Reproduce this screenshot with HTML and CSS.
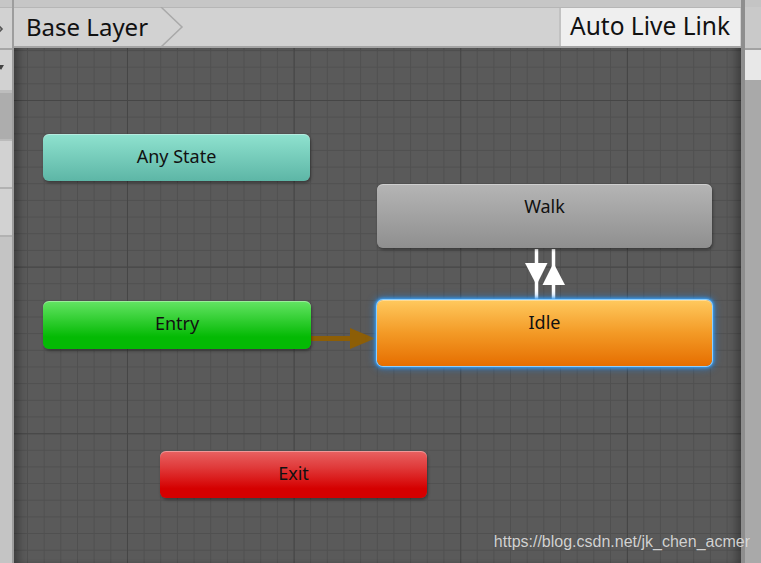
FILE: index.html
```html
<!DOCTYPE html>
<html lang="en">
<head>
    <meta charset="UTF-8">
    <title>Animator - Base Layer</title>
    <link rel="stylesheet" href="styles.css">
</head>
<body>
    <div class="window">
        <!-- left panel (parameters/layers list, clipped) -->
        <div class="side-left">
            <div class="sl-top"></div>
            <div class="sl-head">
                <svg class="sl-glyph" width="8" height="12" viewBox="0 0 8 12"><path d="M0 1 L5 6 L0 11" fill="none" stroke="#555" stroke-width="1.6"/></svg>
            </div>
            <div class="sl-row sl-search">
                <svg class="sl-drop" width="6" height="6" viewBox="0 0 6 6"><polygon points="0,0 6,0 3,5" fill="#444"/></svg>
            </div>
            <div class="sl-row sl-selected"></div>
            <div class="sl-row"></div>
            <div class="sl-row"></div>
            <div class="sl-rest"></div>
        </div>

        <div class="main">
            <div class="toolbar">
                <div class="crumb">Base Layer</div>
                <svg class="crumb-arrow" width="24" height="39" viewBox="0 0 24 39"><path d="M1 0 L22 20 L1 40" fill="none" stroke="#a9a9a9" stroke-width="1.5"/></svg>
                <div class="spacer"></div>
                <div class="live-link">Auto Live Link</div>
            </div>

            <!-- state machine graph -->
            <div class="canvas">
                <svg class="links" width="727" height="515" viewBox="0 0 727 515">
                    <!-- Entry -> Idle -->
                    <line x1="297" y1="290.5" x2="340" y2="290.5" stroke="#8d5e06" stroke-width="5"/>
                    <polygon points="336,280 361,290.5 336,301" fill="#8d5e06"/>
                    <!-- Walk -> Idle -->
                    <line x1="522.5" y1="201" x2="522.5" y2="252" stroke="#fff" stroke-width="3.5"/>
                    <polygon points="511,215 533.5,215 522.5,237" fill="#fff"/>
                    <!-- Idle -> Walk -->
                    <line x1="539.5" y1="201" x2="539.5" y2="252" stroke="#fff" stroke-width="3.5"/>
                    <polygon points="528.5,237 551,237 539.5,215" fill="#fff"/>
                </svg>

                <div class="node any-state" style="left: 29px; top: 86px; width: 267px; height: 47px;">Any State</div>
                <div class="node walk" style="left: 363px; top: 136px; width: 335px; height: 64px;">Walk</div>
                <div class="node entry" style="left: 29px; top: 253px; width: 268px; height: 48px;">Entry</div>
                <div class="node idle" style="left: 363px; top: 252px; width: 335px; height: 66px;">Idle</div>
                <div class="node exit" style="left: 146px; top: 403px; width: 267px; height: 47px;">Exit</div>
            </div>
        </div>

        <!-- right panel (inspector, clipped) -->
        <div class="side-right">
            <div class="sr-head"></div>
            <div class="sr-field"></div>
            <div class="sr-rest"></div>
        </div>
    </div>

    <div class="watermark">https://blog.csdn.net/jk_chen_acmer</div>
</body>
</html>
```

FILE: styles.css
```css
/* page */
body {
    margin: 0;
    width: 761px;
    height: 563px;
    overflow: hidden;
    position: relative;
    font-family: "Noto Sans", "DejaVu Sans", sans-serif;
    color: #111;
}

.window {
    display: flex;
    height: 563px;
}

/* left panel */
.side-left {
    width: 12px;
    border-right: 2px solid #9d9d9d;
    background: #c4c4c4;
    display: flex;
    flex-direction: column;
    overflow: hidden;
}

.sl-top {
    height: 7px;
    background: #c6c6c6;
    border-bottom: 1px solid #b6b6b6;
}

.sl-head {
    height: 40px;
    background: #d2d2d2;
    border-bottom: 2px solid #a6a6a6;
    position: relative;
}

.sl-glyph {
    position: absolute;
    left: -3px;
    top: 15px;
}

.sl-row {
    height: 46px;
    background: #d2d2d2;
    border-bottom: 2px solid #b2b2b2;
}

.sl-search {
    height: 40px;
    border-bottom: 3px solid #bdbdbd;
    position: relative;
}

.sl-drop {
    position: absolute;
    left: -2px;
    top: 15px;
}

.sl-selected {
    background: #adadad;
    border-bottom-color: #bbbbbb;
}

.sl-rest {
    flex: 1;
    background: #c4c4c4;
}

/* main area */
.main {
    flex: 1;
    display: flex;
    flex-direction: column;
    min-width: 0;
}

.toolbar {
    height: 48px;
    box-sizing: border-box;
    border-top: 7px solid #c6c6c6;
    border-bottom: 2px solid #a4a4a4;
    box-shadow: inset 0 1px #b6b6b6;
    background: #d2d2d2;
    display: flex;
    align-items: stretch;
}

.crumb {
    padding-left: 12px;
    width: 134px;
    font-size: 24px;
    line-height: 40px;
    white-space: nowrap;
}

.crumb-arrow {
    display: block;
}

.spacer {
    flex: 1;
}

.live-link {
    background: #efefef;
    border-left: 2px solid #c2c2c2;
    margin-top: 1px;
    width: 181px;
    box-sizing: border-box;
    margin-right: 1px;
    padding-left: 9px;
    font-size: 24.5px;
    line-height: 36px;
    white-space: nowrap;
}

/* graph canvas */
.canvas {
    flex: 1;
    position: relative;
    overflow: hidden;
    background-color: #5a5a5a;
    background-image:
        linear-gradient(to right, #464646 1px, transparent 1px),
        linear-gradient(to bottom, #464646 1px, transparent 1px),
        linear-gradient(to right, #505050 1px, transparent 1px),
        linear-gradient(to bottom, #505050 1px, transparent 1px);
    background-size: 166.67px 166.67px, 166.67px 166.67px, 16.667px 16.667px, 16.667px 16.667px;
    background-position: 113px 52px, 113px 52px, 13px 2px, 13px 2px;
    box-shadow: inset 10px 0 10px -6px rgba(0, 0, 0, 0.35), inset -10px 0 10px -6px rgba(0, 0, 0, 0.35);
}

.links {
    position: absolute;
    left: 0;
    top: 0;
}

.node {
    position: absolute;
    box-sizing: border-box;
    border-radius: 6px;
    text-align: center;
    font-size: 18px;
    line-height: 45px;
    box-shadow: 1px 2px 3px rgba(0, 0, 0, 0.35), inset 0 1px rgba(255, 255, 255, 0.35);
}

.any-state {
    background: linear-gradient(#8fe2cf, #5db6a6);
}

.walk {
    background: linear-gradient(#b5b5b5, #8f8f8f);
}

.entry {
    background: linear-gradient(#64e464, #04ba04 75%);
}

.idle {
    background: linear-gradient(#ffc95e, #f39a26 50%, #e66e00);
    box-shadow: 0 0 0 1px #8ccfff, 0 0 3px 2px #3a9df0, 0 0 7px 3px rgba(30, 130, 230, 0.6), inset 0 1px rgba(255, 255, 255, 0.35);
}

.exit {
    background: linear-gradient(#e96262, #e03a3a 35%, #d50000 80%);
}

/* right panel */
.side-right {
    width: 16px;
    border-left: 4px solid #8e8e8e;
    display: flex;
    flex-direction: column;
}

.sr-head {
    height: 41px;
    border-top: 7px solid #c4c4c4;
    background: #c9c9c9;
    border-bottom: 2px solid #a2a2a2;
}

.sr-field {
    height: 30px;
    background: #e8e8e8;
}

.sr-rest {
    flex: 1;
    background: #a9a9a9;
}

/* blog watermark */
.watermark {
    position: absolute;
    right: 11px;
    top: 533px;
    font-family: "Liberation Sans", Arial, sans-serif;
    font-size: 16px;
    color: rgba(235, 235, 235, 0.85);
    text-shadow: 0 0 1px rgba(0, 0, 0, 0.2);
}
```
